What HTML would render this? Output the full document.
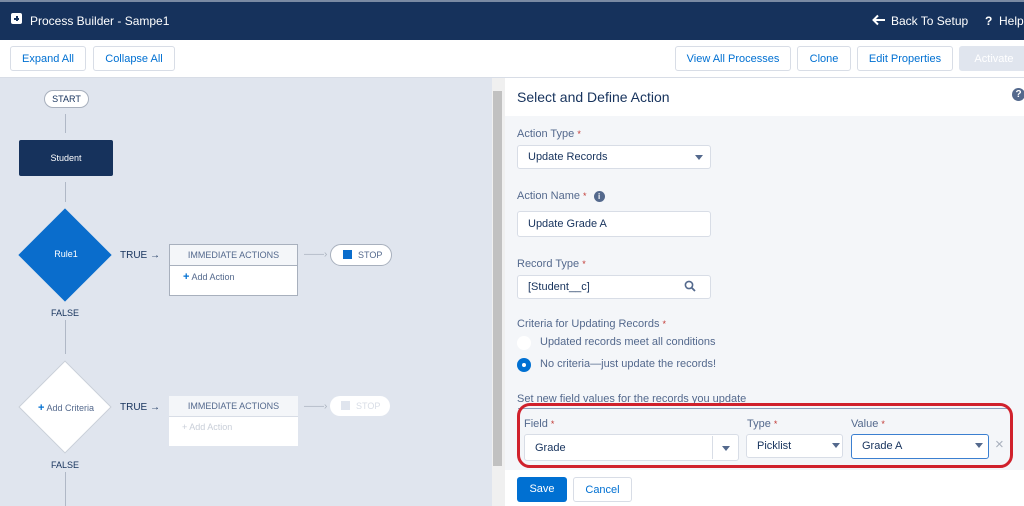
<!DOCTYPE html>
<html><head><style>
*{box-sizing:border-box;margin:0;padding:0}
body{width:1024px;height:506px;overflow:hidden;font-family:"Liberation Sans",sans-serif;font-size:11px;position:relative;background:#fff}
.a{position:absolute}
.btn{position:absolute;background:#fff;border:1px solid #d8dde6;border-radius:3px;color:#0070d2;font-size:11px;text-align:center;line-height:24px}
.lbl{position:absolute;color:#54698d;font-size:11px}
.lbl b{color:#c23934;font-weight:normal;font-size:9px}
.inp{position:absolute;background:#fff;border:1px solid #d8dde6;border-radius:3px;color:#16325c;font-size:11px;padding-left:10px;line-height:22px}
.car{position:absolute;width:0;height:0;border-left:4px solid transparent;border-right:4px solid transparent;border-top:5px solid #54698d}
.vl{position:absolute;width:1px;background:#b0b8c6}
.t{position:absolute;color:#54698d;font-size:10px}
</style></head><body>
<div class="a" style="left:0;top:0;width:1024px;height:40px;background:#16325c;border-top:2px solid #7a8aa3"></div>
<div class="a" style="left:11px;top:13px;width:11px;height:11px;background:#fff;border-radius:2px"><div class="a" style="left:3px;top:5px;width:5px;height:2px;background:#16325c"></div><div class="a" style="left:4.5px;top:3px;width:2px;height:5px;background:#16325c"></div></div>
<div class="a" style="left:30px;top:14px;color:#fff;font-size:12px">Process Builder - Sampe1</div>
<svg class="a" style="left:872px;top:14px" width="14" height="12"><path d="M13 6H2M6 1.5L1.5 6 6 10.5" fill="none" stroke="#fff" stroke-width="2"/></svg>
<div class="a" style="left:891px;top:14px;color:#fff;font-size:12px">Back To Setup</div>
<div class="a" style="left:985px;top:14px;color:#fff;font-size:12px"><b>?</b>&nbsp; Help</div>
<div class="a" style="left:0;top:40px;width:1024px;height:38px;background:#fff;border-bottom:1px solid #d8dde6"></div>
<div class="btn" style="left:10px;top:46px;width:76px;height:25px">Expand All</div>
<div class="btn" style="left:93px;top:46px;width:82px;height:25px">Collapse All</div>
<div class="btn" style="left:675px;top:46px;width:116px;height:25px">View All Processes</div>
<div class="btn" style="left:797px;top:46px;width:54px;height:25px">Clone</div>
<div class="btn" style="left:857px;top:46px;width:96px;height:25px">Edit Properties</div>
<div class="btn" style="left:959px;top:46px;width:70px;height:25px;background:#e0e5ee;color:#fff;border-color:#e0e5ee">Activate</div>

<div class="a" style="left:0;top:78px;width:492px;height:428px;background:#e0e5ee"></div>
<div class="a" style="left:492px;top:78px;width:13px;height:428px;background:#f0f0f0"></div>
<div class="a" style="left:493px;top:91px;width:9px;height:375px;background:#c1c1c1"></div>

<div class="a" style="left:44px;top:90px;width:45px;height:18px;border:1px solid #a8b0bd;border-radius:9px;background:#fff;color:#16325c;font-size:9px;text-align:center;line-height:16px">START</div>
<div class="vl" style="left:65px;top:114px;height:19px"></div>
<div class="a" style="left:19px;top:140px;width:94px;height:36px;background:#16325c;border-radius:2px;color:#fff;font-size:9px;text-align:center;line-height:36px">Student</div>
<div class="vl" style="left:65px;top:182px;height:20px"></div>
<div class="a" style="left:32px;top:222px;width:66px;height:66px;background:#0a6dcc;transform:rotate(45deg)"></div>
<div class="a" style="left:19px;top:249px;width:94px;text-align:center;color:#fff;font-size:9px">Rule1</div>
<div class="t" style="left:120px;top:250px;color:#16325c">TRUE →</div>
<div class="a" style="left:169px;top:244px;width:129px;height:52px;border:1px solid #a8b0bd;background:#fff"><div style="height:21px;background:#f4f6f9;border-bottom:1px solid #a8b0bd;text-align:center;line-height:21px;color:#54698d;font-size:9px">IMMEDIATE ACTIONS</div><div style="padding:5px 0 0 13px;color:#54698d;font-size:9px"><span style="color:#0070d2;font-weight:bold;font-size:11px">+</span> Add Action</div></div>
<div class="t" style="left:304px;top:249px;color:#a8b0bd">——›</div>
<div class="a" style="left:330px;top:244px;width:62px;height:22px;border:1px solid #a8b0bd;border-radius:11px;background:#fff;color:#54698d;font-size:9px;line-height:20px;padding-left:12px"><span style="display:inline-block;width:9px;height:9px;background:#0a6dcc;vertical-align:-1px;margin-right:6px"></span>STOP</div>
<div class="t" style="left:51px;top:308px;color:#16325c;font-size:9px">FALSE</div>
<div class="vl" style="left:65px;top:320px;height:34px"></div>
<div class="a" style="left:32px;top:374px;width:66px;height:66px;background:#fff;border:1px solid #c8ced8;transform:rotate(45deg)"></div>
<div class="a" style="left:19px;top:402px;width:94px;text-align:center;color:#54698d;font-size:9px"><span style="color:#0070d2;font-weight:bold;font-size:11px">+</span> Add Criteria</div>
<div class="t" style="left:120px;top:402px;color:#16325c">TRUE →</div>
<div class="a" style="left:169px;top:396px;width:129px;height:50px;background:#fff"><div style="height:21px;background:#f4f6f9;border-bottom:1px solid #d8dde6;text-align:center;line-height:21px;color:#54698d;font-size:9px">IMMEDIATE ACTIONS</div><div style="padding:5px 0 0 13px;color:#c8ced8;font-size:9px">+ Add Action</div></div>
<div class="t" style="left:304px;top:401px;color:#a8b0bd">——›</div>
<div class="a" style="left:330px;top:396px;width:60px;height:20px;border-radius:10px;background:#fff;color:#d8dde6;font-size:9px;line-height:20px;padding-left:11px"><span style="display:inline-block;width:9px;height:9px;background:#e0e5ee;vertical-align:-1px;margin-right:6px"></span>STOP</div>
<div class="t" style="left:51px;top:460px;color:#16325c;font-size:9px">FALSE</div>
<div class="vl" style="left:65px;top:472px;height:34px"></div>

<div class="a" style="left:505px;top:78px;width:519px;height:428px;background:#f4f6f9"></div>
<div class="a" style="left:505px;top:78px;width:519px;height:38px;background:#fff"></div>
<div class="a" style="left:517px;top:89px;color:#16325c;font-size:14px">Select and Define Action</div>
<div class="a" style="left:1012px;top:88px;width:13px;height:13px;border-radius:50%;background:#54698d;color:#fff;font-size:10px;font-weight:bold;text-align:center;line-height:13px">?</div>
<div class="lbl" style="left:517px;top:128px">Action Type <b>*</b></div>
<div class="inp" style="left:517px;top:145px;width:194px;height:24px">Update Records</div><div class="car" style="left:695px;top:155px"></div>
<div class="lbl" style="left:517px;top:190px">Action Name <b>*</b> <span style="display:inline-block;width:11px;height:11px;border-radius:50%;background:#54698d;color:#fff;font-size:8px;text-align:center;line-height:11px;font-weight:bold;margin-left:4px">i</span></div>
<div class="inp" style="left:517px;top:211px;width:194px;height:26px;line-height:24px">Update Grade A</div>
<div class="lbl" style="left:517px;top:258px">Record Type <b>*</b></div>
<div class="inp" style="left:517px;top:275px;width:194px;height:24px">[Student__c]</div>
<svg class="a" style="left:684px;top:280px" width="12" height="12"><circle cx="5" cy="5" r="3.6" fill="none" stroke="#54698d" stroke-width="1.6"/><line x1="7.6" y1="7.6" x2="11" y2="11" stroke="#54698d" stroke-width="1.8"/></svg>
<div class="lbl" style="left:517px;top:318px">Criteria for Updating Records <b>*</b></div>
<div class="a" style="left:517px;top:336px;width:14px;height:14px;border-radius:50%;background:#fff"></div>
<div class="lbl" style="left:540px;top:336px">Updated records meet all conditions</div>
<div class="a" style="left:517px;top:358px;width:14px;height:14px;border-radius:50%;background:#0070d2"><div class="a" style="left:5px;top:5px;width:4px;height:4px;background:#fff;border-radius:50%"></div></div>
<div class="lbl" style="left:540px;top:358px">No criteria—just update the records!</div>
<div class="lbl" style="left:517px;top:393px">Set new field values for the records you update</div>
<div class="a" style="left:518px;top:408px;width:492px;height:62px;border-top:1px solid #8aa0bd"></div>
<div class="lbl" style="left:524px;top:418px">Field <b>*</b></div>
<div class="lbl" style="left:747px;top:418px">Type <b>*</b></div>
<div class="lbl" style="left:851px;top:418px">Value <b>*</b></div>
<div class="inp" style="left:524px;top:434px;width:215px;height:27px;line-height:27px">Grade</div>
<div class="a" style="left:712px;top:436px;width:1px;height:23px;background:#d8dde6"></div><div class="car" style="left:722px;top:446px"></div>
<div class="inp" style="left:746px;top:434px;width:97px;height:24px">Picklist</div><div class="car" style="left:832px;top:443px"></div>
<div class="inp" style="left:851px;top:434px;width:138px;height:25px;border-color:#3b7fd0">Grade A</div><div class="car" style="left:975px;top:443px"></div>
<div class="a" style="left:995px;top:436px;color:#a8b0bd;font-size:15px">×</div>
<div class="a" style="left:505px;top:470px;width:519px;height:36px;background:#fff"></div>
<div class="a" style="left:517px;top:403px;width:496px;height:65px;border:3px solid #d0212c;border-radius:13px"></div>
<div class="a" style="left:517px;top:477px;width:50px;height:25px;background:#0070d2;border-radius:3px;color:#fff;text-align:center;line-height:25px">Save</div>
<div class="btn" style="left:573px;top:477px;width:59px;height:25px">Cancel</div>
</body></html>
